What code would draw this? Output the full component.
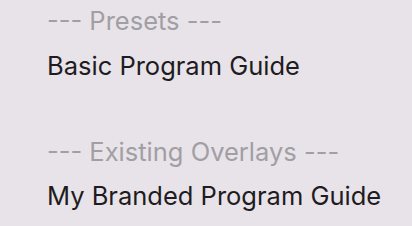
export default function App() {
  return (
    <div className="w-[412px] h-[226px] overflow-hidden bg-[#e8e3e9] font-['Inter','Noto_Sans',sans-serif] text-[25.5px] leading-[45px]">
      <div className="-mt-[2px] pl-[47px]">
        <div className="h-[45px] text-[#a19ea4]">--- Presets ---</div>
        <div className="h-[45px] text-[#1e1c21]">Basic Program Guide</div>
        <div className="h-[41px]" />
        <div className="h-[44px] text-[#a19ea4]">--- Existing Overlays ---</div>
        <div className="h-[45px] text-[#1e1c21]">My Branded Program Guide</div>
      </div>
    </div>
  );
}
